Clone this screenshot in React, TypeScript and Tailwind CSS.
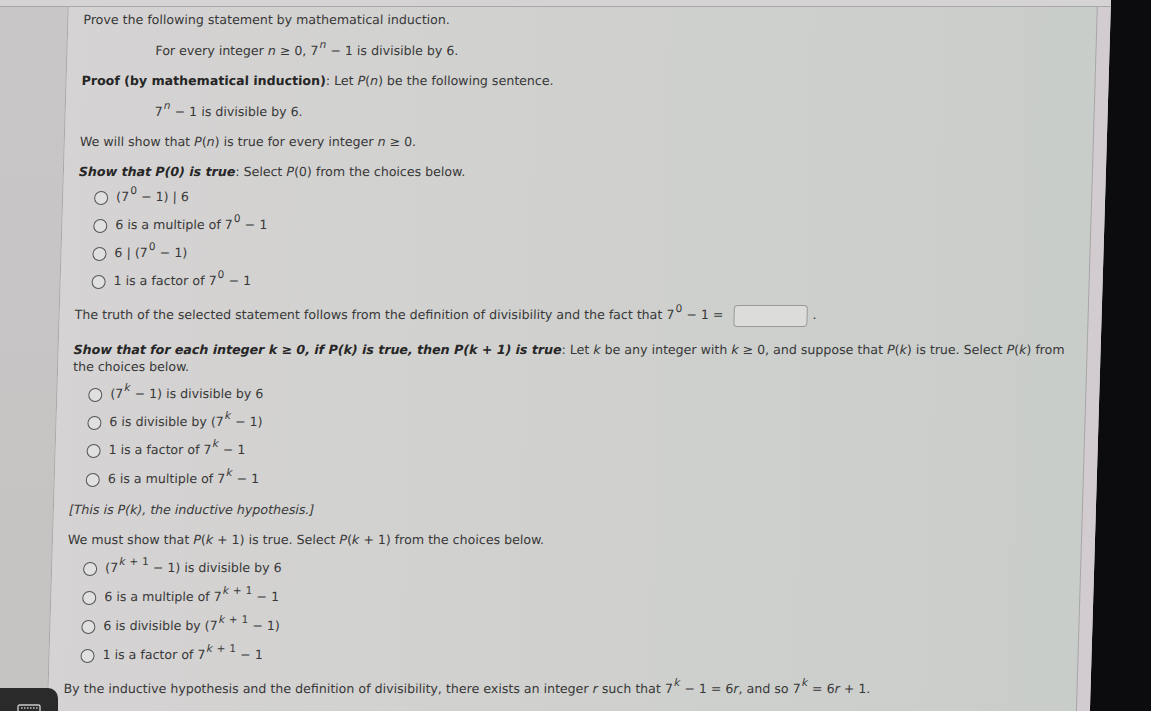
import React from 'react';

const M = '\u2212';

function Sup({ children }: { children: React.ReactNode }) {
  return <sup className="text-[10.5px] -top-[0.7em] ml-[1px] tracking-[0.3px]">{children}</sup>;
}

function V({ children }: { children: React.ReactNode }) {
  return <i>{children}</i>;
}

function Radio({ children, mt = 'mt-[11px]' }: { children: React.ReactNode; mt?: string }) {
  return (
    <div className={`flex items-center h-[17px] pl-[16px] ${mt}`}>
      <span className="w-[14px] h-[14px] rounded-full border-[1.5px] border-[#555] bg-[#e0e0e0] mr-[8px] shrink-0" />
      <span className="whitespace-nowrap">{children}</span>
    </div>
  );
}

function Line({ children, className = '' }: { children: React.ReactNode; className?: string }) {
  return <div className={`leading-[17px] whitespace-nowrap ${className}`}>{children}</div>;
}

export default function App() {
  return (
    <div className="relative w-[1151px] h-[711px] overflow-hidden bg-[#0c0c0e]">
      <div
        className="w-[1111px] h-[740px] origin-top-left skew-x-[-1.7deg] flex flex-col bg-[#cfcfce] text-[#383838] text-[12.6px]"
        style={{ fontFamily: '"DejaVu Sans", Verdana, sans-serif' }}
      >
        <div className="h-[7px] bg-[#d6d3d4] border-b border-[#a9a8a8] shrink-0" />
        <div className="flex flex-1">
          <div className="w-[69px] bg-linear-to-b from-[#c9c6c7] to-[#c4c3c1] border-r border-[#a8a8a8] shrink-0" />
          <div className="flex-1 bg-linear-to-r from-[#d5d3d3] via-[#d0d1cf] to-[#c9cdca] pl-[15px] pt-[4px]">
            <Line>Prove the following statement by mathematical induction.</Line>
            <Line className="mt-[14px] pl-[73px]">
              For every integer <V>n</V> ≥ 0, 7<Sup><V>n</V></Sup> {M} 1 is divisible by 6.
            </Line>
            <Line className="mt-[13px]">
              <b className="text-[#262626]">Proof (by mathematical induction)</b>: Let <V>P</V>(<V>n</V>) be the following sentence.
            </Line>
            <Line className="mt-[14px] pl-[74px]">
              7<Sup><V>n</V></Sup> {M} 1 is divisible by 6.
            </Line>
            <Line className="mt-[13px]">
              We will show that <V>P</V>(<V>n</V>) is true for every integer <V>n</V> ≥ 0.
            </Line>
            <Line className="mt-[13px]">
              <b className="italic text-[#262626]">Show that P(0) is true</b>: Select <V>P</V>(0) from the choices below.
            </Line>
            <Radio mt="mt-[9px]">(7<Sup>0</Sup> {M} 1) | 6</Radio>
            <Radio>6 is a multiple of 7<Sup>0</Sup> {M} 1</Radio>
            <Radio>6 | (7<Sup>0</Sup> {M} 1)</Radio>
            <Radio>1 is a factor of 7<Sup>0</Sup> {M} 1</Radio>
            <div className="mt-[17px] h-[17px] flex items-center whitespace-nowrap">
              <span>
                The truth of the selected statement follows from the definition of divisibility and the fact that 7<Sup>0</Sup> {M} 1 =
              </span>
              <span className="ml-[10px] w-[74px] h-[22px] rounded-[4px] border border-[#999] bg-[#dcdcdb] shrink-0" />
              <span className="ml-[5px]">.</span>
            </div>
            <Line className="mt-[17px]">
              <b className="italic text-[#262626]">
                Show that for each integer k ≥ 0, if P(k) is true, then P(k + 1) is true
              </b>
              : Let <V>k</V> be any integer with <V>k</V> ≥ 0, and suppose that <V>P</V>(<V>k</V>) is true. Select <V>P</V>(<V>k</V>) from
              <br />
              the choices below.
            </Line>
            <Radio>(7<Sup><V>k</V></Sup> {M} 1) is divisible by 6</Radio>
            <Radio>6 is divisible by (7<Sup><V>k</V></Sup> {M} 1)</Radio>
            <Radio>1 is a factor of 7<Sup><V>k</V></Sup> {M} 1</Radio>
            <Radio mt="mt-[12px]">6 is a multiple of 7<Sup><V>k</V></Sup> {M} 1</Radio>
            <Line className="mt-[13px] italic">
              [This is P(k), the inductive hypothesis.]
            </Line>
            <Line className="mt-[13px]">
              We must show that <V>P</V>(<V>k</V> + 1) is true. Select <V>P</V>(<V>k</V> + 1) from the choices below.
            </Line>
            <Radio mt="mt-[12px]">(7<Sup><V>k</V> + 1</Sup> {M} 1) is divisible by 6</Radio>
            <Radio mt="mt-[12px]">6 is a multiple of 7<Sup><V>k</V> + 1</Sup> {M} 1</Radio>
            <Radio mt="mt-[12px]">6 is divisible by (7<Sup><V>k</V> + 1</Sup> {M} 1)</Radio>
            <Radio mt="mt-[12px]">1 is a factor of 7<Sup><V>k</V> + 1</Sup> {M} 1</Radio>
            <Line className="mt-[16px]">
              By the inductive hypothesis and the definition of divisibility, there exists an integer <V>r</V> such that 7<Sup><V>k</V></Sup> {M} 1 = 6<V>r</V>, and so 7<Sup><V>k</V></Sup> = 6<V>r</V> + 1.
            </Line>
          </div>
          <div className="w-[14px] bg-[#d2cbcf] border-l border-[#a6a6a6] shrink-0" />
        </div>
      </div>

      <div className="absolute left-0 bottom-0 w-[58px] h-[23px] bg-[#2a2a2b] rounded-tr-[10px] flex justify-center items-end">
        <svg width="24" height="8" viewBox="0 0 24 8" className="mb-[-1px]">
          <rect x="1" y="1" width="22" height="8" rx="1.5" fill="none" stroke="#c9c9c9" strokeWidth="1.4" />
          <g fill="#c9c9c9">
            <rect x="4" y="3.3" width="1.6" height="1.4" />
            <rect x="7" y="3.3" width="1.6" height="1.4" />
            <rect x="10" y="3.3" width="1.6" height="1.4" />
            <rect x="13" y="3.3" width="1.6" height="1.4" />
            <rect x="16" y="3.3" width="1.6" height="1.4" />
            <rect x="19" y="3.3" width="1.6" height="1.4" />
          </g>
        </svg>
      </div>
    </div>
  );
}
